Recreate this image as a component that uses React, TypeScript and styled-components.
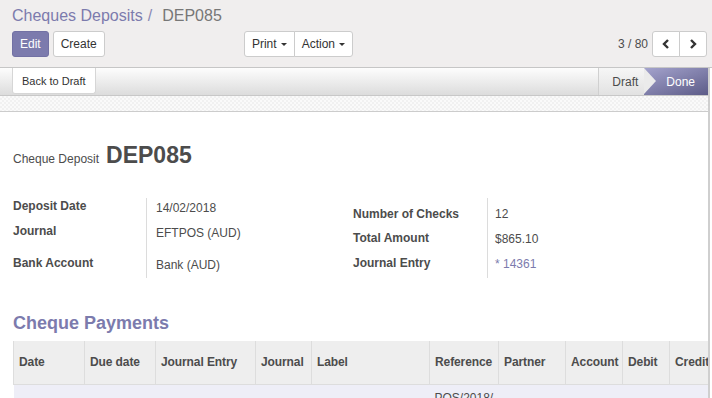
import styled, { createGlobalStyle, css } from "styled-components";

const GlobalStyle = createGlobalStyle`
  html, body {
    margin: 0;
    padding: 0;
    background: #fff;
  }
  body {
    font-family: "Liberation Sans", Arial, sans-serif;
    font-size: 12px;
    color: #4c4c4c;
  }
  * {
    box-sizing: border-box;
  }
`;

const leftFields = [
  { label: "Deposit Date", value: "14/02/2018", h: 25, lp: 0, vp: 2 },
  { label: "Journal", value: "EFTPOS (AUD)", h: 32, lp: 0, vp: 2 },
  { label: "Bank Account", value: "Bank (AUD)", h: 23, lp: 0, vp: 2 },
];

const rightFields = [
  { label: "Number of Checks", value: "12", h: 32, lp: 8, vp: 8 },
  { label: "Total Amount", value: "$865.10", h: 25, lp: 0, vp: 1 },
  { label: "Journal Entry", value: "* 14361", h: 23, lp: 0, vp: 1, link: true },
];

const columns = [
  { name: "Date", width: 71, cell: "" },
  { name: "Due date", width: 71, cell: "" },
  { name: "Journal Entry", width: 100, cell: "" },
  { name: "Journal", width: 56, cell: "" },
  { name: "Label", width: 118, cell: "" },
  { name: "Reference", width: 69, cell: "POS/2018/0012" },
  { name: "Partner", width: 67, cell: "" },
  { name: "Account", width: 57, cell: "" },
  { name: "Debit", width: 47, cell: "" },
  { name: "Credit", width: 45, cell: "" },
];

const App = () => {
  return (
    <>
      <GlobalStyle />
      <ControlPanel>
        <Breadcrumb>
          <Crumb>Cheques Deposits</Crumb>
          <Divider>/</Divider>
          <Current>DEP085</Current>
        </Breadcrumb>
        <ButtonRow>
          <LeftHalf>
            <ButtonGroup>
              <Button $primary>Edit</Button>
              <Button>Create</Button>
            </ButtonGroup>
            <Joined>
              <Button>
                Print
                <Caret />
              </Button>
              <Button>
                Action
                <Caret />
              </Button>
            </Joined>
          </LeftHalf>
          <RightHalf>
            <PagerValue>3 / 80</PagerValue>
            <Joined>
              <PagerButton aria-label="Previous">
                <svg width="8" height="10" viewBox="0 0 8 10">
                  <polyline
                    points="6,1 2,5 6,9"
                    fill="none"
                    stroke="#333"
                    strokeWidth="2.4"
                  />
                </svg>
              </PagerButton>
              <PagerButton aria-label="Next">
                <svg width="8" height="10" viewBox="0 0 8 10">
                  <polyline
                    points="2,1 6,5 2,9"
                    fill="none"
                    stroke="#333"
                    strokeWidth="2.4"
                  />
                </svg>
              </PagerButton>
            </Joined>
          </RightHalf>
        </ButtonRow>
      </ControlPanel>

      <Body>
        <StatusBar>
          <Button $flat>Back to Draft</Button>
          <Steps>
            <Step>Draft</Step>
            <Step $active>Done</Step>
          </Steps>
        </StatusBar>
        <SheetBackground>
          <Sheet>
            <Title>
              <TitleLabel>Cheque Deposit</TitleLabel>
              <TitleName>DEP085</TitleName>
            </Title>

            <Groups>
              <Group $width={340} $labelWidth={133} $valuePad={9}>
                {leftFields.map((f) => (
                  <FieldRow key={f.label}>
                    <FieldLabel $h={f.h} $pad={f.lp}>
                      {f.label}
                    </FieldLabel>
                    <FieldValue $h={f.h} $pad={f.vp}>
                      {f.value}
                    </FieldValue>
                  </FieldRow>
                ))}
              </Group>
              <Group $labelWidth={134} $valuePad={7}>
                {rightFields.map((f) => (
                  <FieldRow key={f.label}>
                    <FieldLabel $h={f.h} $pad={f.lp}>
                      {f.label}
                    </FieldLabel>
                    <FieldValue $h={f.h} $pad={f.vp} $link={f.link}>
                      {f.value}
                    </FieldValue>
                  </FieldRow>
                ))}
              </Group>
            </Groups>

            <SectionTitle>Cheque Payments</SectionTitle>
            <Table>
              <colgroup>
                {columns.map((c) => (
                  <col key={c.name} style={{ width: c.width }} />
                ))}
              </colgroup>
              <thead>
                <tr>
                  {columns.map((c) => (
                    <Th key={c.name}>{c.name}</Th>
                  ))}
                </tr>
              </thead>
              <tbody>
                <tr>
                  {columns.map((c) => (
                    <Td key={c.name}>{c.cell}</Td>
                  ))}
                </tr>
              </tbody>
            </Table>
          </Sheet>
        </SheetBackground>
      </Body>
    </>
  );
};

export default App;

const ControlPanel = styled.div`
  background: #f0eeee;
  border-bottom: 1px solid #c6c6c6;
  padding: 6px 5px 10px 12px;
`;

const Breadcrumb = styled.div`
  font-size: 16px;
  line-height: 20px;
  white-space: nowrap;
`;

const Crumb = styled.span`
  color: #7c7bad;
`;

const Divider = styled.span`
  color: #8a89b4;
  margin: 0 10px 0 5px;
`;

const Current = styled.span`
  color: #777;
`;

const ButtonRow = styled.div`
  display: flex;
  align-items: center;
  margin-top: 5px;
`;

const LeftHalf = styled.div`
  flex: 0 0 341px;
  display: flex;
  justify-content: space-between;
`;

const RightHalf = styled.div`
  flex: 1;
  display: flex;
  justify-content: flex-end;
  align-items: center;
`;

const ButtonGroup = styled.div`
  display: flex;
  gap: 4px;
`;

const Joined = styled.div`
  display: flex;
  & > * + * {
    margin-left: -1px;
  }
  & > *:not(:last-child) {
    border-top-right-radius: 0;
    border-bottom-right-radius: 0;
  }
  & > *:not(:first-child) {
    border-top-left-radius: 0;
    border-bottom-left-radius: 0;
  }
`;

const Button = styled.button<{
  $primary?: boolean;
  $flat?: boolean;
}>`
  height: 26px;
  padding: 0 7px;
  display: flex;
  align-items: center;
  font-family: "Liberation Sans", Arial, sans-serif;
  font-size: 12px;
  color: #333;
  background: #fff;
  border: 1px solid #ccc;
  border-radius: 3px;
  cursor: pointer;
  ${(p) =>
    p.$primary &&
    css`
      background: #7c7bad;
      border-color: #7271a4;
      color: #fff;
    `}
  ${(p) =>
    p.$flat &&
    css`
      padding: 0 9px;
      font-size: 11px;
      border-color: #d6d6d6;
      border-top: none;
      border-radius: 0 0 3px 3px;
    `}
`;

const Caret = styled.span`
  display: inline-block;
  margin-left: 4px;
  margin-top: 1px;
  border-top: 3.5px solid #333;
  border-left: 3.5px solid transparent;
  border-right: 3.5px solid transparent;
`;

const PagerValue = styled.span`
  font-size: 12px;
  color: #4c4c4c;
  margin-right: 4px;
`;

const PagerButton = styled.button`
  width: 28px;
  height: 26px;
  display: flex;
  align-items: center;
  justify-content: center;
  background: #fff;
  border: 1px solid #ccc;
  border-radius: 3px;
  padding: 0;
`;

const Body = styled.div`
  margin-right: 2px;
  border-right: 2px solid #cfcfcf;
`;

const StatusBar = styled.div`
  height: 28px;
  display: flex;
  justify-content: space-between;
  padding-left: 12px;
  background: linear-gradient(#fdfdfd, #dcdcdc);
  border-bottom: 1px solid #c8c8c8;
`;

const Steps = styled.div`
  display: flex;
`;

const Step = styled.div<{ $active?: boolean }>`
  position: relative;
  display: flex;
  align-items: center;
  font-size: 12px;
  color: #4c4c4c;
  padding: 0 6px 0 13px;
  border-left: 1px solid #d0d0d0;
  background: linear-gradient(#f6f6f6, #e2e2e2);
  &::after {
    content: "";
    position: absolute;
    top: 0;
    right: -12px;
    z-index: 1;
    border-left: 12px solid #ebebeb;
    border-top: 13.5px solid transparent;
    border-bottom: 13.5px solid transparent;
  }
  ${(p) =>
    p.$active &&
    css`
      color: #fff;
      padding: 0 13px 0 22px;
      border-left: none;
      background: linear-gradient(160deg, #a4a3cd, #5d5c88);
      &::after {
        display: none;
      }
    `}
`;

const SheetBackground = styled.div`
  padding-top: 15px;
  background: repeating-conic-gradient(#f1f1f1 0 25%, #fafafa 0 50%) 0 0 / 4px
    4px;
`;

const Sheet = styled.div`
  background: #fff;
  border-top: 1px solid #ccc;
  padding: 29px 0 0 13px;
  overflow: hidden;
  height: 287px;
`;

const Title = styled.div`
  display: flex;
  align-items: baseline;
  gap: 7px;
`;

const TitleLabel = styled.span`
  font-size: 12px;
  color: #4c4c4c;
`;

const TitleName = styled.h1`
  margin: 0;
  font-size: 23px;
  line-height: 28px;
  font-weight: bold;
  color: #4c4c4c;
`;

const Groups = styled.div`
  display: flex;
  margin-top: 29px;
`;

const Group = styled.div<{
  $width?: number;
  $labelWidth: number;
  $valuePad: number;
}>`
  flex: ${(p) => (p.$width ? `0 0 ${p.$width}px` : "1")};
  display: grid;
  grid-template-columns: ${(p) => p.$labelWidth}px 1fr;
  & > div > div:last-child {
    padding-left: ${(p) => p.$valuePad}px;
  }
`;

const FieldRow = styled.div`
  display: contents;
`;

const FieldLabel = styled.div<{ $h: number; $pad: number }>`
  height: ${(p) => p.$h}px;
  padding-top: ${(p) => p.$pad}px;
  line-height: 16px;
  font-weight: bold;
  color: #4c4c4c;
`;

const FieldValue = styled.div<{ $h: number; $pad: number; $link?: boolean }>`
  height: ${(p) => p.$h}px;
  padding-top: ${(p) => p.$pad}px;
  line-height: 16px;
  border-left: 1px solid #dcdcdc;
  color: ${(p) => (p.$link ? "#7c7bad" : "#4c4c4c")};
`;

const SectionTitle = styled.h2`
  margin: 34px 0 7px;
  font-size: 18px;
  line-height: 22px;
  font-weight: bold;
  color: #7c7bad;
`;

const Table = styled.table`
  border-collapse: collapse;
  table-layout: fixed;
  width: 701px;
`;

const Th = styled.th`
  height: 43px;
  padding: 0 4px 0 5px;
  background: #eeeeee;
  border: 1px solid #dddddd;
  border-top: none;
  text-align: left;
  font-size: 12px;
  font-weight: bold;
  color: #4c4c4c;
  white-space: nowrap;
  overflow: hidden;
  letter-spacing: -0.1px;
`;

const Td = styled.td`
  height: 58px;
  padding: 5px;
  background: #eeeef7;
  line-height: 16px;
  font-size: 12px;
  color: #4c4c4c;
  vertical-align: top;
  overflow-wrap: anywhere;
`;
